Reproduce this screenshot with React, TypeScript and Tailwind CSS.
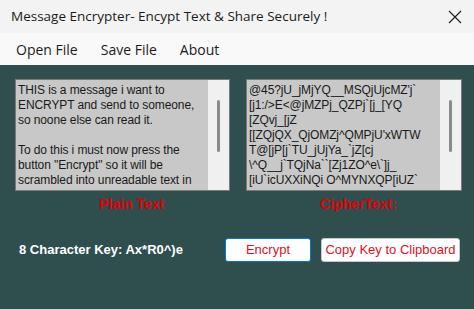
import React from "react";

const plain = `THIS is a message i want to ENCRYPT and send to someone, so noone else can read it.

To do this i must now press the button "Encrypt" so it will be scrambled into unreadable text in`;

const cipher = [
    "@45?jU_jMjYQ__MSQjUjcMZ'j`",
    "[j1:/>E<@jMZPj_QZPj`[j_[YQ",
    "[ZQvj_[jZ",
    "[[ZQjQX_QjOMZj^QMPjU'xWTW",
    "T@[jP[j`TU_jUjYa_`jZ[cj",
    "\\^Q__j`TQjNa``[Zj1ZO^e\\`]j_",
    "[iU`icUXXiNQi O^MYNXQP[iUZ`",
];

function TextPane({ children }: { children: React.ReactNode }) {
    return (
        <div className="flex h-[112px] border border-[#7a7a7a]">
            <div className="flex-1 overflow-hidden bg-[#c8c8c8] px-[2px] pt-[3px] text-[12px] leading-[15px] tracking-[-0.1px] text-[#1a1a1a] whitespace-pre-wrap">
                {children}
            </div>
            <div className="flex w-[21px] justify-center bg-[#f0f0f0] pt-[20px]">
                <div className="h-[52px] w-[3px] rounded-full bg-[#8a8a8a]" />
            </div>
        </div>
    );
}

export default function App() {
    return (
        <div
            className="flex h-[309px] w-[474px] flex-col overflow-hidden"
            style={{ fontFamily: '"Liberation Sans", Arial, sans-serif' }}>
            <div className="flex h-[33px] items-center justify-between bg-[#f3f3f3] pl-[11px] pr-[12px]">
                <span className="text-[13.5px] text-[#1b1b1b]" style={{ fontFamily: '"Open Sans", sans-serif' }}>
                    Message Encrypter- Encypt Text &amp; Share Securely !
                </span>
                <svg width="14" height="14" viewBox="0 0 14 14" stroke="#222" strokeWidth="1.2">
                    <path d="M1 1L13 13M13 1L1 13" />
                </svg>
            </div>
            <div
                className="flex h-[32px] items-center gap-[23px] bg-[#f9f9f9] pl-[16px] text-[14px] text-[#1b1b1b]"
                style={{ fontFamily: '"Open Sans", sans-serif' }}>
                <span>Open File</span>
                <span>Save File</span>
                <span>About</span>
            </div>
            <div className="flex flex-1 flex-col bg-[#2f4f4f] pt-[14px]">
                <div className="flex gap-[16px] pl-[15px]">
                    <div className="flex w-[215px] flex-col">
                        <TextPane>{plain}</TextPane>
                        <div className="mt-[3px] pl-[84px] text-[14px] font-bold text-[#e00000]">Plain Text</div>
                    </div>
                    <div className="flex w-[216px] flex-col">
                        <TextPane>{cipher.join("\n")}</TextPane>
                        <div className="mt-[3px] pl-[74px] text-[14px] font-bold text-[#e00000]">CipherText:</div>
                    </div>
                </div>
                <div className="mt-[23px] flex items-center pl-[19px]">
                    <span className="w-[206px] text-[13px] font-bold text-white">8 Character Key: Ax*R0^)e</span>
                    <button className="h-[24px] w-[86px] rounded-[3px] border border-[#0078d4] bg-white text-[13px] text-[#e0102a]">
                        Encrypt
                    </button>
                    <button className="ml-[10px] h-[24px] w-[139px] rounded-[3px] border border-[#c8c8c8] bg-white text-[13px] text-[#e0102a]">
                        Copy Key to Clipboard
                    </button>
                </div>
            </div>
        </div>
    );
}
